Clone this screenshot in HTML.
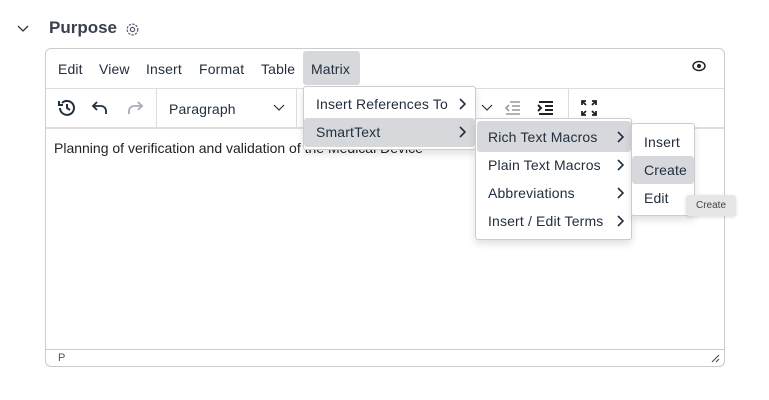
<!DOCTYPE html>
<html><head><style>
*{box-sizing:border-box;margin:0;padding:0}
body{width:769px;height:400px;background:#fff;font-family:"Liberation Sans",sans-serif;color:#222f3e;position:relative;overflow:hidden}
.a{position:absolute}
.t{font-size:14px;color:#222f3e;white-space:nowrap;letter-spacing:.15px}
.menu{position:absolute;background:#fff;border:1px solid #ccc;border-radius:3px;box-shadow:0 4px 8px rgba(0,0,0,.12)}
.hl{position:absolute;background:#d6d8dc;border-radius:3px}
.chev{position:absolute;width:8px;height:12px}
</style></head><body>
<svg class="a" style="left:16px;top:23px" width="14" height="10" viewBox="0 0 14 10"><path d="M2 3l5 5 5-5" fill="none" stroke="#333" stroke-width="1.3"/></svg>
<div class="a" style="left:49px;top:18px;font-size:17px;font-weight:bold;color:#3a3f4e">Purpose</div>
<svg class="a" style="left:125px;top:22px" width="15" height="15" viewBox="0 0 14 14"><circle cx="7" cy="7" r="2" fill="none" stroke="#555b6e" stroke-width="1.1"/><circle cx="7" cy="7" r="5" fill="none" stroke="#555b6e" stroke-width="1.1" stroke-dasharray="2.2 1.1"/></svg>

<div class="a" style="left:45px;top:48px;width:680px;height:319px;border:1px solid #ccc;border-radius:6px"></div>
<div class="a" style="left:46px;top:88px;width:678px;height:1px;background:#ddd"></div>
<div class="a" style="left:46px;top:127px;width:678px;height:2px;background:#ddd"></div>
<div class="a" style="left:46px;top:349px;width:678px;height:1px;background:#ccc"></div>

<div class="a t" style="left:58px;top:61px">Edit</div>
<div class="a t" style="left:99px;top:61px">View</div>
<div class="a t" style="left:146px;top:61px">Insert</div>
<div class="a t" style="left:199px;top:61px">Format</div>
<div class="a t" style="left:261px;top:61px">Table</div>
<div class="hl" style="left:303px;top:51px;width:57px;height:34px"></div>
<div class="a t" style="left:311px;top:61px">Matrix</div>
<svg class="a" style="left:691px;top:59px" width="16" height="14" viewBox="0 0 16 14"><ellipse cx="8" cy="7" rx="6" ry="4.5" fill="none" stroke="#222" stroke-width="1.5"/><circle cx="8" cy="7" r="2" fill="#222"/></svg>

<svg class="a" style="left:56px;top:97px" width="22" height="22" viewBox="0 0 22 22"><path d="M4 11a7 7 0 1 0 2-5M3 4v4h4M11 7v4l3 2" fill="none" stroke="#222f3e" stroke-width="2"/></svg>
<svg class="a" style="left:90px;top:98px" width="20" height="20" viewBox="0 0 20 20"><path d="M7 4L3 8l4 4M3 8h8a5 5 0 0 1 5 5v3" fill="none" stroke="#222f3e" stroke-width="1.8"/></svg>
<svg class="a" style="left:125px;top:98px" width="20" height="20" viewBox="0 0 20 20"><path d="M13 4l4 4-4 4M17 8H9a5 5 0 0 0-5 5v3" fill="none" stroke="#aab" stroke-width="1.8"/></svg>
<div class="a" style="left:156px;top:89px;width:1px;height:38px;background:#ddd"></div>
<div class="a t" style="left:169px;top:101px">Paragraph</div>
<svg class="a" style="left:273px;top:104px" width="12" height="8" viewBox="0 0 12 8"><path d="M1 1l5 5 5-5" fill="none" stroke="#333" stroke-width="1.2"/></svg>
<div class="a" style="left:296px;top:89px;width:1px;height:38px;background:#ddd"></div>
<svg class="a" style="left:481px;top:104px" width="12" height="8" viewBox="0 0 12 8"><path d="M1 1l5 5 5-5" fill="none" stroke="#333" stroke-width="1.2"/></svg>
<svg class="a" style="left:503px;top:100px" width="18" height="16" viewBox="0 0 18 16"><path d="M7 2h10M9 6h8M9 10h8M3 14h14M6 5l-3 3 3 3" fill="none" stroke="#999" stroke-width="1.6"/></svg>
<svg class="a" style="left:536px;top:100px" width="18" height="16" viewBox="0 0 18 16"><path d="M3 2h14M9 6h8M9 10h8M3 14h14M2 5l3 3-3 3" fill="none" stroke="#222" stroke-width="2"/></svg>
<div class="a" style="left:568px;top:89px;width:1px;height:38px;background:#ddd"></div>
<svg class="a" style="left:581px;top:100px" width="16" height="16" viewBox="0 0 16 16"><path d="M1 5V1h4M11 1h4v4M15 11v4h-4M5 15H1v-4M2 2l3 3M14 2l-3 3M14 14l-3-3M2 14l3-3" fill="none" stroke="#222" stroke-width="1.8"/></svg>

<div class="a" style="left:54px;top:140px;font-size:14px;color:#222;white-space:nowrap">Planning of verification and validation of the Medical Device</div>
<div class="a" style="left:58px;top:352px;font-size:11px;color:#555">P</div>
<svg class="a" style="left:710px;top:353px" width="10" height="10" viewBox="0 0 10 10"><path d="M9 2L2 9M9 6L6 9" stroke="#555" stroke-width="1.2"/></svg>

<div class="menu" style="left:303px;top:86px;width:173px;height:64px"></div>
<div class="a t" style="left:316px;top:96px">Insert References To</div>
<svg class="chev" style="left:458px;top:98px" viewBox="0 0 8 12"><path d="M2 1l5 5-5 5" fill="none" stroke="#222f3e" stroke-width="1.6"/></svg>
<div class="hl" style="left:304px;top:118px;width:171px;height:29px"></div>
<div class="a t" style="left:316px;top:124px">SmartText</div>
<svg class="chev" style="left:458px;top:126px" viewBox="0 0 8 12"><path d="M2 1l5 5-5 5" fill="none" stroke="#222f3e" stroke-width="1.6"/></svg>

<div class="menu" style="left:475px;top:118px;width:157px;height:122px"></div>
<div class="hl" style="left:477px;top:121px;width:154px;height:31px"></div>
<div class="a t" style="left:488px;top:129px">Rich Text Macros</div>
<svg class="chev" style="left:616px;top:131px" viewBox="0 0 8 12"><path d="M2 1l5 5-5 5" fill="none" stroke="#222f3e" stroke-width="1.6"/></svg>
<div class="a t" style="left:488px;top:157px">Plain Text Macros</div>
<svg class="chev" style="left:616px;top:159px" viewBox="0 0 8 12"><path d="M2 1l5 5-5 5" fill="none" stroke="#222f3e" stroke-width="1.6"/></svg>
<div class="a t" style="left:488px;top:185px">Abbreviations</div>
<svg class="chev" style="left:616px;top:187px" viewBox="0 0 8 12"><path d="M2 1l5 5-5 5" fill="none" stroke="#222f3e" stroke-width="1.6"/></svg>
<div class="a t" style="left:488px;top:213px">Insert / Edit Terms</div>
<svg class="chev" style="left:616px;top:215px" viewBox="0 0 8 12"><path d="M2 1l5 5-5 5" fill="none" stroke="#222f3e" stroke-width="1.6"/></svg>

<div class="menu" style="left:631px;top:123px;width:64px;height:93px"></div>
<div class="a t" style="left:644px;top:134px">Insert</div>
<div class="hl" style="left:632px;top:156px;width:62px;height:28px"></div>
<div class="a t" style="left:644px;top:162px">Create</div>
<div class="a t" style="left:644px;top:190px">Edit</div>

<div class="a" style="left:686px;top:195px;width:50px;height:21px;background:#e6e6e6;border-radius:3px;box-shadow:0 1px 3px rgba(0,0,0,.15);font-size:10px;color:#444;text-align:center;line-height:21px">Create</div>
</body></html>
